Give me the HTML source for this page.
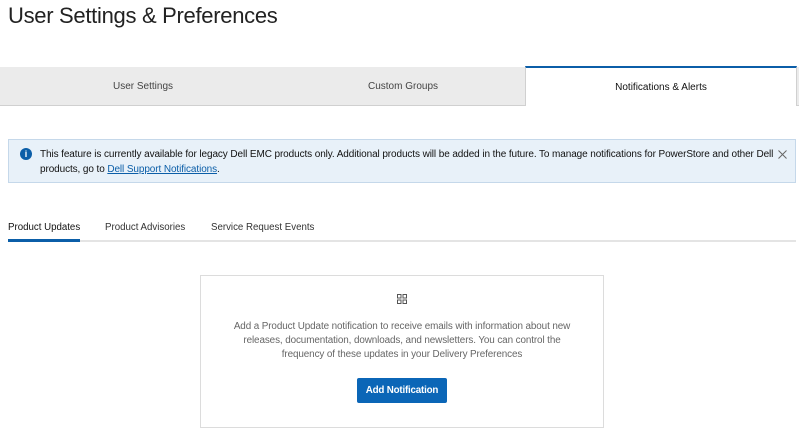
<!DOCTYPE html>
<html><head><style>
*{margin:0;padding:0;box-sizing:border-box}
body{width:799px;height:434px;background:#fff;font-family:"Liberation Sans",sans-serif;color:#0e0e0e;position:relative;overflow:hidden}
.abs{position:absolute}
h1{position:absolute;left:8px;top:3px;font-weight:normal;font-size:22px;color:#222;letter-spacing:-0.3px}
.tabs{left:0;top:67px;width:799px;height:39px;background:#ebebeb;border-bottom:1px solid #d0d0d0}
.tab{position:absolute;top:0;height:39px;line-height:40px;text-align:center;font-size:10px;color:#444}
.act{left:525px;width:272px;top:-1px;height:40px;background:#fff;border-top:2px solid #0b5ea8;border-left:1px solid #d0d0d0;border-right:1px solid #d0d0d0;color:#111}
.alert{left:8px;top:139px;width:788px;height:44px;background:#e8f1f9;border:1px solid #c5d8ea;font-size:10px;color:#111;line-height:15px;padding:7px 0 0 31px;letter-spacing:-0.1px;white-space:nowrap}
.alert a{color:#0b5ea8;text-decoration:underline}
.info{left:11px;top:8px;width:12px;height:12px;border-radius:50%;background:#0b5ea8;color:#fff;font-size:9px;line-height:12px;text-align:center;font-weight:bold}
.sub{top:222px;font-size:9.7px;color:#333}
.line{left:8px;top:240px;width:788px;height:2px;background:#e4e4e4}
.card{left:200px;top:275px;width:404px;height:153px;border:1px solid #dcdcdc}
.txt{left:0;top:44px;width:402px;text-align:center;font-size:9.9px;line-height:14px;color:#666;letter-spacing:-0.1px}
.btn{left:156px;top:102px;width:90px;height:25px;background:#0b66b7;border-radius:2px;color:#fff;font-size:9.8px;text-align:center;line-height:25px;font-weight:bold;letter-spacing:-0.2px}
</style></head><body>
<h1>User Settings &amp; Preferences</h1>
<div class="abs tabs">
<div class="tab" style="left:0;width:286px">User Settings</div>
<div class="tab" style="left:262px;width:282px">Custom Groups</div>
<div class="tab act">Notifications &amp; Alerts</div>
</div>
<div class="abs alert"><div class="abs info">i</div>This feature is currently available for legacy Dell EMC products only. Additional products will be added in the future. To manage notifications for PowerStore and other Dell<br>products, go to <a>Dell Support Notifications</a>.<svg class="abs" style="right:8px;top:10px" width="9" height="9" viewBox="0 0 9 9" stroke="#666" stroke-width="1"><path d="M0.5 0.5L8.5 8.5M8.5 0.5L0.5 8.5"/></svg></div>
<div class="abs sub" style="left:8px;color:#111">Product Updates</div>
<div class="abs sub" style="left:105px">Product Advisories</div>
<div class="abs sub" style="left:211px">Service Request Events</div>
<div class="abs line"></div>
<div class="abs" style="left:8px;top:239px;width:72px;height:3px;background:#0b5ea8"></div>
<div class="abs card">
<svg class="abs" style="left:196px;top:18px" width="10" height="10" viewBox="0 0 10 10" fill="none" stroke="#555" stroke-width="1"><rect x="0.5" y="0.5" width="3.5" height="3.5"/><rect x="6" y="0.5" width="3.5" height="3.5"/><rect x="0.5" y="6" width="3.5" height="3.5"/><rect x="6" y="6" width="3.5" height="3.5"/></svg>
<div class="abs txt">Add a Product Update notification to receive emails with information about new<br>releases, documentation, downloads, and newsletters. You can control the<br>frequency of these updates in your Delivery Preferences</div>
<div class="abs btn">Add Notification</div>
</div>
</body></html>
